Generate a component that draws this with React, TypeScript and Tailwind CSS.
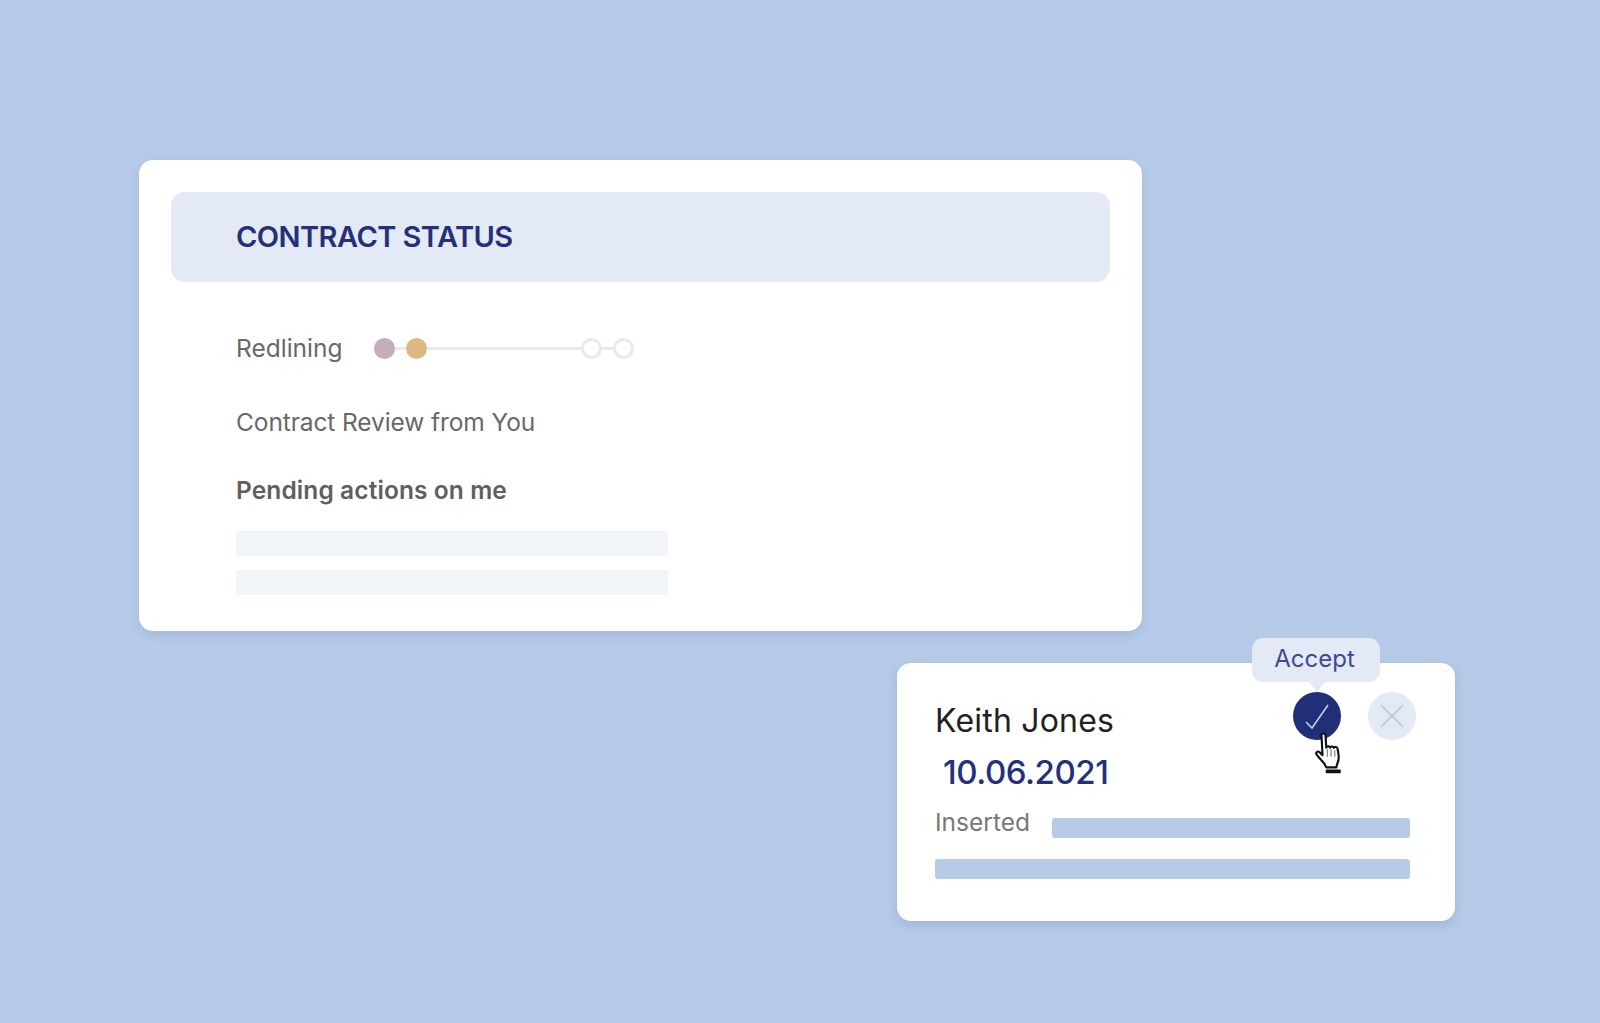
const bodyFont = "font-['Inter','Lato',sans-serif]"

function StepDot({ color }: { color?: string }) {
    if (color) {
        return <span className={`z-10 block w-[21px] h-[21px] rounded-full ${color}`} />
    }
    return <span className="z-10 block w-[21px] h-[21px] rounded-full bg-white border-[3px] border-[#e9e9ea]" />
}

function HandCursor() {
    return (
        <svg className="absolute left-[21px] top-[39px]" width="32" height="45" viewBox="0 0 30 42" fill="none">
            <path d="M11 36h14v3.500H11z" fill="#111" />
            <path
                d="M7 3.500c0-1.600 3.600-1.600 3.800 0l.7 12c.2-1.600 3.500-1.600 3.700 0 .2-1.400 3.300-1.400 3.500.2.300-1.200 3.200-1.100 3.400.6l1 6.700c.4 3-.4 5.800-1.600 8.500l-.5 2.500H11.500L10 31c-2-2.800-5.500-6-7.500-9-1.300-2 .8-3.700 2.500-2.300L8 22.500z"
                fill="#fff"
                stroke="#111"
                strokeWidth="2"
                strokeLinejoin="round"
            />
            <path d="M12.500 17v7M16 17v7M19.500 18v6" stroke="#777" strokeWidth="1" />
        </svg>
    )
}

function ContractCard() {
    return (
        <div className="w-[1003px] h-[471px] bg-white rounded-[14px] p-8 shadow-[0_4px_12px_rgba(70,95,150,0.18)]">
            <div className="h-[90px] flex items-center pl-[65px] bg-[#e3e9f5] rounded-[14px]">
                <h1 className="text-[29px] font-semibold text-[#24307c] tracking-[-0.55px]">CONTRACT STATUS</h1>
            </div>
            <div className="pl-[65px] text-[24.5px] text-[#68686a]">
                <div className="flex items-center h-[40px] mt-[46px]">
                    <span className="w-[138px]">Redlining</span>
                    <div className="relative flex items-center w-[260px] justify-between">
                        <div className="absolute inset-x-2 h-[3px] bg-[#e9e9ea]" />
                        <div className="flex gap-[11px]">
                            <StepDot color="bg-[#c2aeba]" />
                            <StepDot color="bg-[#dcb882]" />
                        </div>
                        <div className="flex gap-[11px]">
                            <StepDot />
                            <StepDot />
                        </div>
                    </div>
                </div>
                <p className="mt-[34px] leading-[40px] tracking-[-0.1px]">Contract Review from You</p>
                <p className="mt-[28px] leading-[40px] font-semibold text-[#5f5f60] tracking-[0.1px]">Pending actions on me</p>
                <div className="mt-[21px] flex flex-col gap-[14px]">
                    <div className="w-[432px] h-[25px] bg-[#f1f4f9]" />
                    <div className="w-[432px] h-[25px] bg-[#f1f4f9]" />
                </div>
            </div>
        </div>
    )
}

function ReviewCard() {
    return (
        <div className="relative ml-[758px] mt-[32px] w-[558px] h-[258px] bg-white rounded-[14px] pl-[38px] pr-[45px] pt-[35px] shadow-[0_4px_12px_rgba(70,95,150,0.22)]">
            <div className="flex justify-between">
                <div>
                    <p className="text-[32px] leading-[46px] text-[#222224] tracking-[0.2px]">Keith Jones</p>
                    <p className="ml-2 mt-[5px] text-[33px] leading-[46px] font-medium text-[#24307c] tracking-[-0.45px]">10.06.2021</p>
                </div>
                <div className="flex gap-[27px] mr-[-6px] mt-[-6px]">
                    <div className="relative w-[48px] h-[48px] rounded-full bg-[#212f79] flex items-center justify-center">
                        <div className="absolute left-[-41px] top-[-54px] w-[128px] h-[44px] pb-[3px] pr-[3px] rounded-[11px] bg-[#e3e9f5] flex items-center justify-center text-[24px] text-[#3d4a90]">
                            Accept
                        </div>
                        <div className="absolute left-[16px] top-[-10px] w-0 h-0 border-x-[8px] border-x-transparent border-t-[10px] border-t-[#e3e9f5]" />
                        <svg width="26" height="28" viewBox="0 0 26 28" fill="none">
                            <path d="M2 20l6 6L24 3" stroke="#c9d3ea" strokeWidth="1.500" />
                        </svg>
                        <HandCursor />
                    </div>
                    <div className="w-[48px] h-[48px] rounded-full bg-[#e3e9f5] flex items-center justify-center">
                        <svg width="26" height="26" viewBox="0 0 26 26" fill="none">
                            <path d="M2 2l22 22M24 2L2 24" stroke="#b9c0d8" strokeWidth="1.500" />
                        </svg>
                    </div>
                </div>
            </div>
            <div className="flex items-center mt-[7px] h-[40px]">
                <span className="w-[117px] text-[24.5px] text-[#77777a]">Inserted</span>
                <div className="mt-[11px] flex-1 h-[20px] rounded-[3px] bg-[#b7cbe9]" />
            </div>
            <div className="mt-[17px] h-[20px] rounded-[3px] bg-[#b7cbe9]" />
        </div>
    )
}

export default function App() {
    return (
        <div className={`w-[1600px] h-[1023px] overflow-hidden bg-[#b7cbe9] pt-[160px] pl-[139px] ${bodyFont}`}>
            <ContractCard />
            <ReviewCard />
        </div>
    )
}
